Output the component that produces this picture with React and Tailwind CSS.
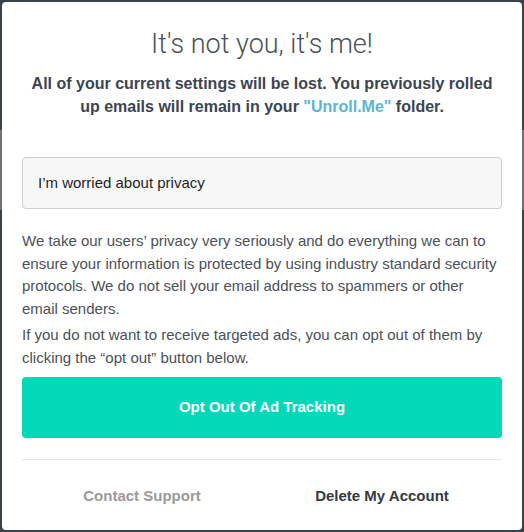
import React, { useState } from "react";

export default function App() {
  const [reason] = useState("I’m worried about privacy");

  return (
    <div className="w-[524px] h-[532px] bg-[#3a434b] p-[2px] relative overflow-hidden font-['Liberation_Sans',Arial,sans-serif]">
      {/* page behind the overlay */}
      <div className="absolute left-0 right-0 top-[130px] h-[80px] bg-[#6d7378]"></div>

      {/* Modal */}
      <div className="relative h-full bg-white rounded-[4px] px-[20px] pt-[26px]">
        <h1 className="text-center text-[27px] leading-[32px] font-light text-[#4b5158] font-['Roboto',sans-serif]">
          It's not you, it's me!
        </h1>
        <p className="mt-[12px] text-center text-[16px] leading-[23px] font-bold text-[#3c4450] px-[4px]">
          All of your current settings will be lost. You previously rolled up emails will remain in your{" "}
          <span className="text-[#5cb6d1]">"Unroll.Me"</span> folder.
        </p>

        {/* Reason picker */}
        <div className="mt-[39px] h-[52px] flex items-center px-[15px] bg-[#f7f7f7] border border-[#cfcfcf] rounded-[4px] text-[15px] text-[#1f1f1f]">
          {reason}
        </div>

        <div className="mt-[21px] space-y-[3px] text-[15px] leading-[22.7px] text-[#4a5159]">
          <p>
            We take our users’ privacy very seriously and do everything we can to ensure your information is protected by using industry standard security protocols. We do not sell your email address to spammers or other email senders.
          </p>
          <p>
            If you do not want to receive targeted ads, you can opt out of them by clicking the “opt out” button below.
          </p>
        </div>

        <button className="mt-[8px] w-full h-[61px] rounded-[4px] bg-[#03d8b9] text-white font-bold text-[15px]">
          Opt Out Of Ad Tracking
        </button>

        <div className="mt-[21px] border-t border-[#e6e6e6]"></div>

        <div className="grid grid-cols-2 pt-[25px] text-[15px] font-bold">
          <button className="text-center text-[#9a9a9a]">Contact Support</button>
          <button className="text-center text-[#343a42]">Delete My Account</button>
        </div>
      </div>
    </div>
  );
}
